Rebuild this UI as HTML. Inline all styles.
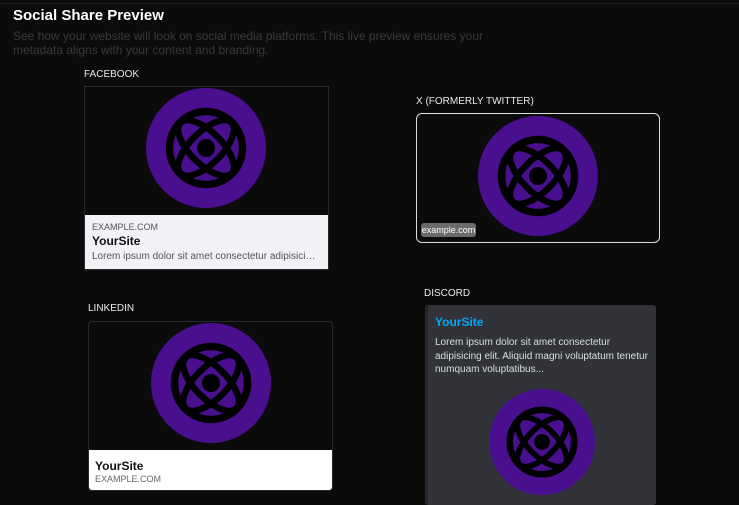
<!DOCTYPE html>
<html><head><meta charset="utf-8"><style>
*{margin:0;padding:0;box-sizing:border-box}
body{width:739px;height:500px;background:#0b0b0b;font-family:"Liberation Sans",sans-serif;position:relative;overflow:hidden;color:#fff}
.a{position:absolute}
.lbl{font-size:10px;color:#e8e8e8}
svg.logo{position:absolute}
</style></head><body>
<svg width="0" height="0" style="position:absolute"><defs>
<symbol id="L" viewBox="-60 -60 120 120">
<circle r="60" fill="#4a0f8f"/>
<circle r="36.5" fill="none" stroke="#000" stroke-width="7.5"/>
<ellipse rx="36" ry="16" fill="none" stroke="#000" stroke-width="6.5" transform="rotate(45)"/>
<ellipse rx="36" ry="16" fill="none" stroke="#000" stroke-width="6.5" transform="rotate(-45)"/>
<circle r="9" fill="#000"/>
</symbol></defs></svg>
<div class="a" style="left:0;top:3px;width:739px;height:1px;background:#1c1c1c"></div>
<div class="a" style="left:13px;top:7px;font-size:15px;font-weight:bold">Social Share Preview</div>
<div class="a" style="left:13px;top:29px;width:480px;font-size:12px;line-height:14px;color:#3a3a3a">See how your website will look on social media platforms. This live preview ensures your metadata aligns with your content and branding.</div>

<div class="a lbl" style="left:84px;top:69px">FACEBOOK</div>
<div class="a" style="left:84px;top:86px;width:245px;height:184px;border:1px solid #2a2a2a;background:#0b0b0b"></div>
<svg class="logo" style="left:146px;top:88px" width="120" height="120"><use href="#L"/></svg>
<div class="a" style="left:85px;top:215px;width:243px;height:54px;background:#f0f2f5">
<div class="a" style="left:7px;top:7px;font-size:9px;color:#555">EXAMPLE.COM</div>
<div class="a" style="left:7px;top:19px;font-size:12px;font-weight:bold;color:#111">YourSite</div>
<div class="a" style="left:7px;top:36px;width:228px;font-size:10px;color:#555;white-space:nowrap;overflow:hidden;text-overflow:ellipsis">Lorem ipsum dolor sit amet consectetur adipisicing elit. Aliquid</div>
</div>

<div class="a lbl" style="left:416px;top:96px">X (FORMERLY TWITTER)</div>
<div class="a" style="left:416px;top:113px;width:244px;height:130px;border:1px solid #ddd;border-radius:6px;background:#0b0b0b"></div>
<svg class="logo" style="left:478px;top:116px" width="120" height="120"><use href="#L"/></svg>
<div class="a" style="left:421px;top:223px;width:55px;height:14px;border-radius:3px;background:#6b6b6b;font-size:9px;line-height:14px;text-align:center;color:#fff">example.com</div>

<div class="a lbl" style="left:88px;top:303px">LINKEDIN</div>
<div class="a" style="left:88px;top:321px;width:245px;height:170px;border:1px solid #2a2a2a;border-radius:4px;background:#0b0b0b;overflow:hidden">
<div class="a" style="left:0;top:128px;width:245px;height:42px;background:#fff">
<div class="a" style="left:6px;top:9px;font-size:12px;font-weight:bold;color:#111">YourSite</div>
<div class="a" style="left:6px;top:24px;font-size:9px;color:#666">EXAMPLE.COM</div>
</div></div>
<svg class="logo" style="left:151px;top:323px" width="120" height="120"><use href="#L"/></svg>

<div class="a lbl" style="left:424px;top:288px">DISCORD</div>
<div class="a" style="left:425px;top:305px;width:231px;height:200px;background:#313338;border-left:3px solid #26272b;border-radius:3px">
<div class="a" style="left:7px;top:10px;font-size:12px;font-weight:bold;color:#00a8fc">YourSite</div>
<div class="a" style="left:7px;top:31px;width:215px;font-size:10px;line-height:13.5px;color:#dbdee1">Lorem ipsum dolor sit amet consectetur adipisicing elit. Aliquid magni voluptatum tenetur numquam voluptatibus...</div>
</div>
<svg class="logo" style="left:489px;top:389px" width="106" height="106"><use href="#L"/></svg>
</body></html>
